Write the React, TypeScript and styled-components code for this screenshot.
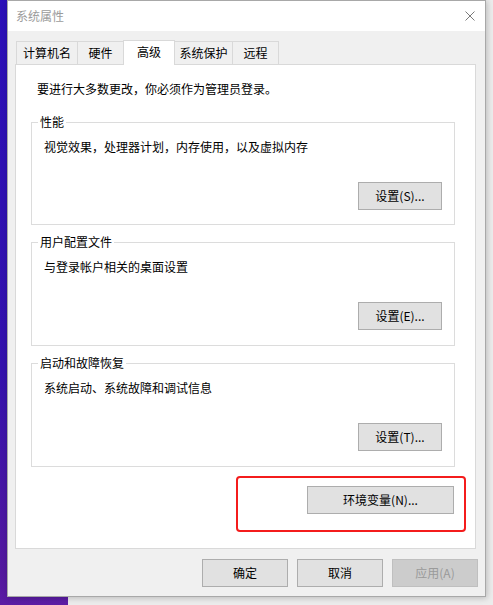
import React from "react";
import styled, { createGlobalStyle } from "styled-components";

const GlobalStyle = createGlobalStyle`
  html, body { margin: 0; padding: 0; }
  body {
    font-family: "Noto Sans CJK SC", "Noto Sans", sans-serif;
    font-size: 12px;
    color: #000;
  }
`;

const Desktop = styled.div`
  width: 493px;
  height: 605px;
  overflow: hidden;
  box-sizing: border-box;
  padding-left: 7px;
  background:
    linear-gradient(to right, transparent 68px, #ececec 68px),
    linear-gradient(120deg, transparent 92%, #8a48c8 96%, #6a2ab4 100%),
    linear-gradient(172deg, #2b10b8 0%, #3412ad 55%, #54199f 85%, #6a24b0 100%);
`;

const Window = styled.div`
  width: 479px;
  height: 597px;
  box-sizing: border-box;
  border: 1px solid #a8a8a8;
  background: #f0f0f0;
  box-shadow: 1px 1px 6px rgba(0, 0, 0, 0.22);
  display: flex;
  flex-direction: column;
`;

const TitleBar = styled.div`
  height: 30px;
  flex: none;
  background: #fff;
  display: flex;
  align-items: center;
  justify-content: space-between;
  padding: 0 9px 1px 8px;
  box-sizing: border-box;
`;

const Title = styled.span`
  font-size: 12px;
  line-height: 16px;
  color: #9b9b9b;
`;

const CloseIcon = styled.svg`
  width: 10px;
  height: 10px;
  margin-right: 1px;
`;

const Body = styled.div`
  flex: 1;
  display: flex;
  flex-direction: column;
  padding: 9px 7px 0 7px;
`;

const TabStrip = styled.div`
  display: flex;
  align-items: flex-end;
  height: 24px;
  margin-left: 1px;
  position: relative;
  z-index: 1;
`;

const Tab = styled.div<{ $active?: boolean; $w: number }>`
  box-sizing: border-box;
  width: ${(p) => p.$w}px;
  height: ${(p) => (p.$active ? 25 : 23)}px;
  margin-bottom: ${(p) => (p.$active ? -1 : 0)}px;
  margin-right: -1px;
  border: 1px solid #d9d9d9;
  border-bottom: none;
  background: ${(p) => (p.$active ? "#fff" : "#f0f0f0")};
  display: flex;
  align-items: center;
  justify-content: center;
  padding-bottom: ${(p) => (p.$active ? 2 : 0)}px;
  font-size: 12px;
  line-height: 16px;
  white-space: nowrap;
  position: relative;
  z-index: ${(p) => (p.$active ? 2 : 1)};
`;

const Panel = styled.div`
  height: 485px;
  margin-right: 2px;
  box-sizing: border-box;
  background: #fff;
  border: 1px solid #d9d9d9;
  display: flex;
  flex-direction: column;
  padding: 16px 9px 0 15px;
`;

const Intro = styled.div`
  margin-left: 6px;
  line-height: 16px;
`;

const Group = styled.fieldset<{ $first?: boolean }>`
  width: 424px;
  box-sizing: border-box;
  margin: ${(p) => (p.$first ? 17 : 9)}px 0 0 0;
  padding: 0;
  min-inline-size: 0;
  border: 1px solid #dcdcdc;
`;

const Legend = styled.legend`
  margin-left: 6px;
  padding: 0 2px;
  line-height: 16px;
  font-size: 12px;
`;

const GroupBody = styled.div<{ $pb: number }>`
  display: flex;
  flex-direction: column;
  padding: 9px 12px ${(p) => p.$pb}px 12px;
`;

const Description = styled.div`
  line-height: 16px;
`;

const ButtonRow = styled.div<{ $top?: number }>`
  display: flex;
  justify-content: flex-end;
  margin-top: ${(p) => p.$top ?? 0}px;
`;

const Button = styled.button<{ $w: number; $disabled?: boolean }>`
  width: ${(p) => p.$w}px;
  height: 28px;
  box-sizing: border-box;
  margin: 0;
  padding: 0;
  font-family: inherit;
  font-size: 12px;
  line-height: 16px;
  color: ${(p) => (p.$disabled ? "#9a9a9a" : "#000")};
  background: ${(p) => (p.$disabled ? "#cccccc" : "#e1e1e1")};
  border: 1px solid ${(p) => (p.$disabled ? "#bfbfbf" : "#adadad")};
  border-radius: 0;
`;

const Highlight = styled.div`
  align-self: flex-end;
  width: 230px;
  height: 56px;
  box-sizing: border-box;
  margin-top: 9px;
  border: 2px solid #f41c1c;
  border-radius: 4px;
  display: flex;
  justify-content: flex-end;
  align-items: flex-start;
  padding: 8px 10px 0 0;
`;

const Footer = styled.div`
  display: flex;
  justify-content: flex-end;
  gap: 9px;
  margin-top: 10px;
`;

const groups = [
  { title: "性能", text: "视觉效果，处理器计划，内存使用，以及虚拟内存", button: "设置(S)...", pb: 14 },
  { title: "用户配置文件", text: "与登录帐户相关的桌面设置", button: "设置(E)...", pb: 15 },
  { title: "启动和故障恢复", text: "系统启动、系统故障和调试信息", button: "设置(T)...", pb: 15 },
];

const tabs = [
  { label: "计算机名", w: 62 },
  { label: "硬件", w: 47 },
  { label: "高级", w: 52, active: true },
  { label: "系统保护", w: 59 },
  { label: "远程", w: 47 },
];

export default function App() {
  return (
    <>
      <GlobalStyle />
      <Desktop>
        <Window>
          <TitleBar>
            <Title>系统属性</Title>
            <CloseIcon viewBox="0 0 10 10">
              <path d="M0.5 0.5 L9.5 9.5 M9.5 0.5 L0.5 9.5" stroke="#7a7a7a" strokeWidth="1" fill="none" />
            </CloseIcon>
          </TitleBar>
          <Body>
            <TabStrip>
              {tabs.map((t) => (
                <Tab key={t.label} $w={t.w} $active={t.active}>
                  {t.label}
                </Tab>
              ))}
            </TabStrip>
            <Panel>
              <Intro>要进行大多数更改，你必须作为管理员登录。</Intro>
              {groups.map((g, i) => (
                <Group key={g.title} $first={i === 0}>
                  <Legend>{g.title}</Legend>
                  <GroupBody $pb={g.pb}>
                    <Description>{g.text}</Description>
                    <ButtonRow $top={27}>
                      <Button $w={84}>{g.button}</Button>
                    </ButtonRow>
                  </GroupBody>
                </Group>
              ))}
              <Highlight>
                <Button $w={147}>环境变量(N)...</Button>
              </Highlight>
            </Panel>
            <Footer>
              <Button $w={86}>确定</Button>
              <Button $w={86}>取消</Button>
              <Button $w={86} $disabled>应用(A)</Button>
            </Footer>
          </Body>
        </Window>
      </Desktop>
    </>
  );
}
